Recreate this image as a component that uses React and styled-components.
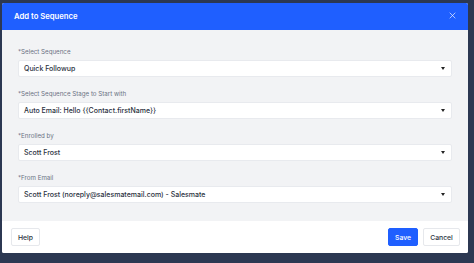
import React from "react";
import styled, { createGlobalStyle } from "styled-components";

const Global = createGlobalStyle`
  html, body { margin: 0; padding: 0; background: #2c3852; }
  body { font-family: Inter, "Noto Sans", "Liberation Sans", sans-serif; }
`;

const Backdrop = styled.div`
  width: 474px;
  height: 263px;
  box-sizing: border-box;
  padding: 3px 6px 10px 2px;
  background: #2c3852;
`;

const Modal = styled.div`
  width: 466px;
  height: 250px;
  display: flex;
  flex-direction: column;
  background: #fff;
  border-radius: 2px;
  overflow: hidden;
`;

const Header = styled.div`
  height: 27px;
  flex: none;
  background: #1f5fff;
  display: flex;
  align-items: center;
  justify-content: space-between;
  padding: 0 12px 0 12px;
  color: #fff;
`;

const Title = styled.div`
  font-size: 7.7px;
  font-weight: 600;
`;

const Close = styled.button`
  border: 0;
  background: none;
  padding: 0;
  display: flex;
  color: rgba(255,255,255,0.7);
  margin-top: -2px;
`;

const Body = styled.div`
  flex: 1;
  background: #f2f3f5;
  padding: 17px 16px 0 16px;
  display: flex;
  flex-direction: column;
  gap: 12px;
`;

const Group = styled.div`
  display: flex;
  flex-direction: column;
  gap: 3px;
`;

const Label = styled.div`
  font-size: 6.2px;
  line-height: 10px;
  color: #6b7283;
`;

const Select = styled.div`
  height: 17px;
  box-sizing: border-box;
  background: #fff;
  border: 1px solid #e8eaee;
  border-radius: 2px;
  display: flex;
  align-items: center;
  justify-content: space-between;
  padding: 0 6px 0 5px;
  font-size: 7px;
  font-weight: 500;
  color: #2a3140;
`;

const Caret = styled.span`
  width: 0;
  height: 0;
  border-left: 2.5px solid transparent;
  border-right: 2.5px solid transparent;
  border-top: 3px solid #222;
`;

const Footer = styled.div`
  height: 32px;
  flex: none;
  display: flex;
  align-items: center;
  justify-content: space-between;
  padding: 0 8px 0 9px;
  background: #fff;
`;

const Right = styled.div`
  display: flex;
  gap: 5px;
`;

const Button = styled.button`
  height: 18px;
  width: ${(p) => p.$w}px;
  box-sizing: border-box;
  padding: 0;
  border-radius: 2px;
  font-family: inherit;
  font-size: 6.8px;
  font-weight: 500;
  border: 1px solid ${(p) => (p.$primary ? "#1f5fff" : "#e6e8ec")};
  background: ${(p) => (p.$primary ? "#1f5fff" : "#fff")};
  color: ${(p) => (p.$primary ? "#fff" : "#2a3140")};
`;

const fields = [
  { label: "*Select Sequence", value: "Quick Followup" },
  { label: "*Select Sequence Stage to Start with", value: "Auto Email: Hello {{Contact.firstName}}" },
  { label: "*Enrolled by", value: "Scott Frost" },
  { label: "*From Email", value: "Scott Frost (noreply@salesmatemail.com) - Salesmate" },
];

export default function App() {
  return (
    <>
      <Global />
      <Backdrop>
        <Modal>
          <Header>
            <Title>Add to Sequence</Title>
            <Close aria-label="close">
              <svg width="7" height="7" viewBox="0 0 10 10">
                <path d="M1 1L9 9M9 1L1 9" stroke="currentColor" strokeWidth="1.3" />
              </svg>
            </Close>
          </Header>
          <Body>
            {fields.map((f) => (
              <Group key={f.label}>
                <Label>{f.label}</Label>
                <Select>
                  <span>{f.value}</span>
                  <Caret />
                </Select>
              </Group>
            ))}
          </Body>
          <Footer>
            <Button $w={29}>Help</Button>
            <Right>
              <Button $primary $w={30}>Save</Button>
              <Button $w={37}>Cancel</Button>
            </Right>
          </Footer>
        </Modal>
      </Backdrop>
    </>
  );
}
